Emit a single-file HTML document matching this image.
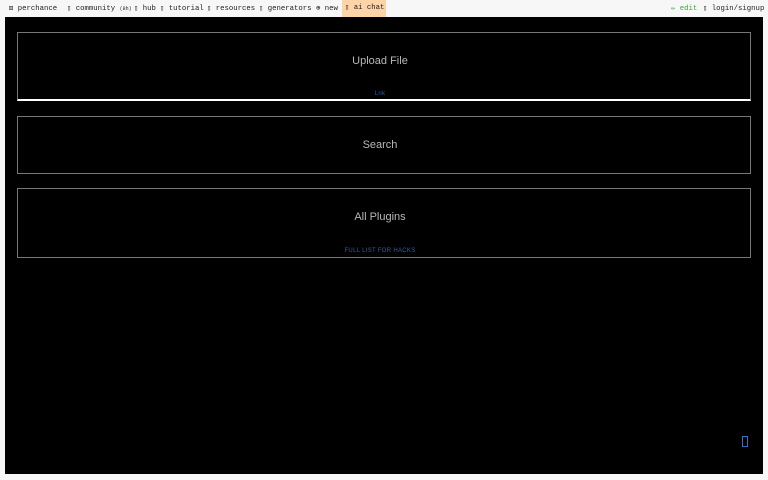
<!DOCTYPE html>
<html><head><style>
body{margin:0;width:768px;height:480px;background:#f7f7f7;position:relative;overflow:hidden;font-family:"Liberation Mono",monospace}
.nav{position:absolute;top:0;left:0;width:768px;height:17px;font-size:7.3px;color:#222;line-height:17px}
.nav span{position:absolute;top:0.5px;white-space:nowrap}
.main{position:absolute;left:5px;top:17px;width:758px;height:457px;background:#000}
.box{position:absolute;left:12px;width:734px;border:1px solid #777;box-sizing:border-box;font-family:"Liberation Sans",sans-serif;color:#b8b8b8;text-align:center}
.t{position:absolute;width:100%;font-size:11px;left:-4px}
.s{position:absolute;width:100%;font-size:6px;color:#2a5ea8;left:-4px;letter-spacing:.3px}
</style></head><body>
<div class="nav">
<span style="left:9px;">⚄ perchance</span>
<span style="left:67px">▯ community <small style="font-size:5px">(8h)</small></span>
<span style="left:134px">▯ hub</span>
<span style="left:160px">▯ tutorial</span>
<span style="left:207px">▯ resources</span>
<span style="left:259px">▯ generators</span>
<span style="left:316px">⊕ new</span>
<span style="left:342px;width:44px;background:#fcd4a8;padding-left:3px;box-sizing:border-box;top:0">▯ ai chat</span>
<span style="left:671px;color:#3a3">✏ edit</span>
<span style="left:703px">▯ login/signup</span>
</div>
<div class="main">
<div class="box" style="top:15px;height:69px;border-bottom:2px solid #fff"><div class="t" style="top:22px">Upload File</div><div class="s" style="top:58px">Lnk</div></div>
<div class="box" style="top:99px;height:58px"><div class="t" style="top:22px">Search</div></div>
<div class="box" style="top:171px;height:70px"><div class="t" style="top:22px">All Plugins</div><div class="s" style="top:59px">FULL LIST FOR HACKS</div></div>
<div style="position:absolute;left:737px;top:419px;width:4px;height:9px;border:1px solid #3a70c0"></div>
</div>
</body></html>
